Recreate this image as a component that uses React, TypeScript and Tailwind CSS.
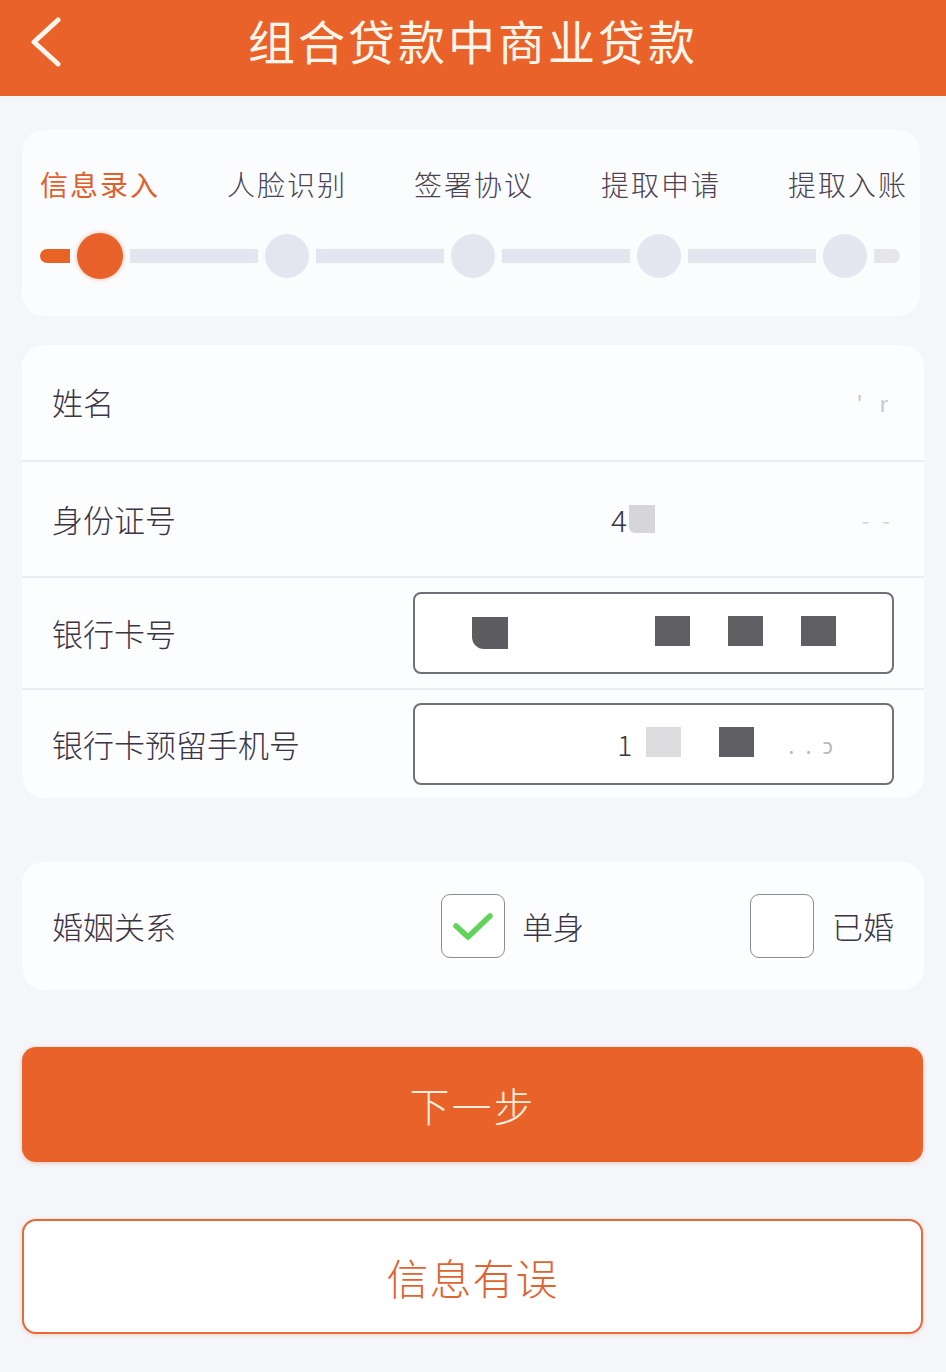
import React from "react";

const cjk = { fontFamily: '"Noto Sans CJK SC", "Noto Sans", sans-serif' };

const steps = ["信息录入", "人脸识别", "签署协议", "提取申请", "提取入账"];

function Block({ w = 35, tone = "dark" }: { w?: number; tone?: "dark" | "light" }) {
  const cls = tone === "dark" ? "bg-[#5f5f63]" : "bg-[#dcdcdf]";
  return <span className={`inline-block h-[30px] ${cls}`} style={{ width: w }} />;
}

function Progress() {
  return (
    <div className="flex items-center gap-[7px] pl-[18px] pr-[20px]">
      <div className="h-[14px] w-[30px] rounded-l-full bg-[#ea6326]" />
      <div className="h-[46px] w-[46px] rounded-full bg-[#e8612a] shadow-[0_0_4px_rgba(232,97,42,0.5)]" />
      {[0, 1, 2, 3].map((i) => (
        <React.Fragment key={i}>
          <div className="h-[14px] flex-1 bg-[#e3e6ee]" />
          <div className="h-[44px] w-[44px] rounded-full bg-[#e3e6ee]" />
        </React.Fragment>
      ))}
      <div className="h-[14px] w-[26px] rounded-r-full bg-[#e6e5ea]" />
    </div>
  );
}

function Row({ label, children, last, h }: { label: string; children?: React.ReactNode; last?: boolean; h: string }) {
  return (
    <div className={`flex items-center justify-between pl-[30px] pr-[30px] ${last ? "" : "border-b-2 border-[#e9edf2]"} ${h}`}>
      <span className="text-[31px] font-light text-[#3b3444]">{label}</span>
      {children}
    </div>
  );
}

function InputBox({ children }: { children: React.ReactNode }) {
  return (
    <div className="flex h-[82px] w-[481px] items-center justify-end rounded-[8px] border-2 border-[#707078] bg-white pr-[56px]">
      {children}
    </div>
  );
}

function CheckBox({ checked }: { checked?: boolean }) {
  return (
    <div className="flex h-[64px] w-[64px] items-center justify-center rounded-[9px] border-[1.5px] border-[#8c8c92] bg-white">
      {checked ? (
        <svg width="48" height="48" viewBox="0 0 48 48" fill="none">
          <path d="M7 24 L19 35 L41 14" stroke="#5fd35a" strokeWidth="5.5" strokeLinecap="round" strokeLinejoin="round" />
        </svg>
      ) : null}
    </div>
  );
}

export default function App() {
  return (
    <div className="min-h-[1372px] w-[946px] bg-[#f4f6fa]" style={cjk}>
      <header className="relative flex h-[96px] items-center justify-center bg-[#e8622a] pb-[16px]">
        <svg className="absolute left-[26px] top-[17px]" width="40" height="50" viewBox="0 0 40 50" fill="none">
          <path d="M32 3 L8 25 L32 47" stroke="#fff5ec" strokeWidth="5" strokeLinecap="round" strokeLinejoin="round" />
        </svg>
        <h1 className="text-[47px] font-normal tracking-[3px] text-[#fff5ea]">组合贷款中商业贷款</h1>
      </header>

      <div className="px-[22px] pt-[34px]">
        <section className="mr-[4px] h-[186px] rounded-[22px] bg-[#fbfcfe] pt-[34px]">
          <div className="flex justify-between pl-[18px] pr-[12px]">
            {steps.map((s, i) => (
              <span
                key={s}
                className={`text-[28px] leading-[40px] tracking-[2px] ${i === 0 ? "font-normal text-[#e0602c]" : "font-light text-[#4a4252]"}`}
              >
                {s}
              </span>
            ))}
          </div>
          <div className="mt-[29px]">
            <Progress />
          </div>
        </section>

        <section className="mt-[29px] overflow-hidden rounded-[22px] bg-[#fcfdff]">
          <Row label="姓名" h="h-[117px]">
            <span className="text-[22px] tracking-[6px] text-[#c8c8cc]">' r</span>
          </Row>
          <Row label="身份证号" h="h-[116px]">
            <div className="flex flex-1 items-center justify-between pl-[435px]">
              <span className="flex items-center">
                <span className="text-[30px] font-light text-[#3b3444]">4</span>
                <span className="ml-[2px] inline-block h-[28px] w-[26px] rounded-bl-[6px] bg-[#d6d6da]" />
              </span>
              <span className="text-[22px] tracking-[4px] text-[#d2d2d6]">- -</span>
            </div>
          </Row>
          <Row label="银行卡号" h="h-[112px]">
            <InputBox>
              <div className="flex items-center">
                <span className="inline-block h-[32px] w-[36px] rounded-bl-[12px] bg-[#5d5d61]" />
                <span className="ml-[147px]"><Block /></span>
                <span className="ml-[38px]"><Block /></span>
                <span className="ml-[38px]"><Block /></span>
              </div>
            </InputBox>
          </Row>
          <Row label="银行卡预留手机号" last h="h-[108px]">
            <InputBox>
              <div className="flex items-center">
                <span className="text-[28px] font-light text-[#3b3444]">1</span>
                <span className="ml-[14px]"><Block tone="light" /></span>
                <span className="ml-[38px]"><Block /></span>
                <span className="ml-[34px] text-[22px] tracking-[3px] text-[#b8b8bc]">. . ɔ</span>
              </div>
            </InputBox>
          </Row>
        </section>

        <section className="mt-[64px] flex h-[128px] items-center rounded-[22px] bg-[#fcfdff] pl-[30px] pr-[30px]">
          <span className="w-[389px] text-[31px] font-light text-[#3b3444]">婚姻关系</span>
          <CheckBox checked />
          <span className="ml-[17px] text-[31px] font-light text-[#3b3444]">单身</span>
          <span className="flex-1" />
          <CheckBox />
          <span className="ml-[18px] text-[31px] font-light text-[#3b3444]">已婚</span>
        </section>

        <button
          type="button"
          className="mt-[57px] flex h-[115px] w-[901px] items-center justify-center rounded-[14px] bg-[#e8622a] text-[40px] font-light tracking-[2px] text-[#fdeede] shadow-[0_1px_4px_rgba(232,98,42,0.35)]"
        >
          下一步
        </button>

        <button
          type="button"
          className="mt-[57px] flex h-[115px] w-[901px] items-center justify-center rounded-[14px] border-2 border-[#e46a3a] bg-white text-[42px] font-light tracking-[1px] text-[#e0642f] shadow-[0_1px_4px_rgba(232,98,42,0.25)]"
        >
          信息有误
        </button>
      </div>
    </div>
  );
}
